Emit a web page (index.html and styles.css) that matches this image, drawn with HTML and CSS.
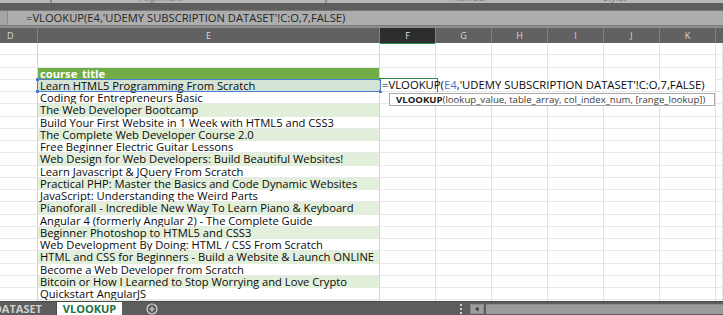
FILE: index.html
```html
<!DOCTYPE html>
<html>
<head>
<meta charset="utf-8">
<link rel="stylesheet" href="styles.css">
</head>
<body>
<div class="app">
  <div class="ribbon-tail">
    <span class="mark m1"></span>
    <span class="grp g1">Alignment</span>
    <span class="mark m2"></span>
    <span class="grp g2">Number</span>
    <span class="grp g3">Styles</span>
    <span class="grp g4">Cells</span>
  </div>
  <div class="ribbon-edge"></div>
  <div class="formula-bar">
    <div class="fx-stub"></div>
    <div class="fx-box">=VLOOKUP(E4,'UDEMY SUBSCRIPTION DATASET'!C:O,7,FALSE)</div>
  </div>
  <div class="fx-gap"></div>
  <div class="col-headers">
    <div class="ch ch-d">D</div>
    <div class="ch">E</div>
    <div class="ch ch-active">F</div>
    <div class="ch">G</div>
    <div class="ch">H</div>
    <div class="ch">I</div>
    <div class="ch">J</div>
    <div class="ch">K</div>
    <div class="ch ch-last"></div>
  </div>
  <div class="sheet">
    <div class="row"><div class="c"></div><div class="c e"></div><div class="c"></div><div class="c"></div><div class="c"></div><div class="c"></div><div class="c"></div><div class="c"></div><div class="c"></div></div>
    <div class="row"><div class="c"></div><div class="c e"></div><div class="c"></div><div class="c"></div><div class="c"></div><div class="c"></div><div class="c"></div><div class="c"></div><div class="c"></div></div>
    <div class="row"><div class="c"></div><div class="c e hdr">course_title</div><div class="c"></div><div class="c"></div><div class="c"></div><div class="c"></div><div class="c"></div><div class="c"></div><div class="c"></div></div>
    <div class="row"><div class="c"></div><div class="c e sel">Learn HTML5 Programming From Scratch</div><div class="c"></div><div class="c"></div><div class="c"></div><div class="c"></div><div class="c"></div><div class="c"></div><div class="c"></div></div>
    <div class="row"><div class="c"></div><div class="c e">Coding for Entrepreneurs Basic</div><div class="c"></div><div class="c"></div><div class="c"></div><div class="c"></div><div class="c"></div><div class="c"></div><div class="c"></div></div>
    <div class="row"><div class="c"></div><div class="c e alt">The Web Developer Bootcamp</div><div class="c"></div><div class="c"></div><div class="c"></div><div class="c"></div><div class="c"></div><div class="c"></div><div class="c"></div></div>
    <div class="row"><div class="c"></div><div class="c e">Build Your First Website in 1 Week with HTML5 and CSS3</div><div class="c"></div><div class="c"></div><div class="c"></div><div class="c"></div><div class="c"></div><div class="c"></div><div class="c"></div></div>
    <div class="row"><div class="c"></div><div class="c e alt">The Complete Web Developer Course 2.0</div><div class="c"></div><div class="c"></div><div class="c"></div><div class="c"></div><div class="c"></div><div class="c"></div><div class="c"></div></div>
    <div class="row"><div class="c"></div><div class="c e">Free Beginner Electric Guitar Lessons</div><div class="c"></div><div class="c"></div><div class="c"></div><div class="c"></div><div class="c"></div><div class="c"></div><div class="c"></div></div>
    <div class="row"><div class="c"></div><div class="c e alt">Web Design for Web Developers: Build Beautiful Websites!</div><div class="c"></div><div class="c"></div><div class="c"></div><div class="c"></div><div class="c"></div><div class="c"></div><div class="c"></div></div>
    <div class="row"><div class="c"></div><div class="c e">Learn Javascript &amp; JQuery From Scratch</div><div class="c"></div><div class="c"></div><div class="c"></div><div class="c"></div><div class="c"></div><div class="c"></div><div class="c"></div></div>
    <div class="row"><div class="c"></div><div class="c e alt">Practical PHP: Master the Basics and Code Dynamic Websites</div><div class="c"></div><div class="c"></div><div class="c"></div><div class="c"></div><div class="c"></div><div class="c"></div><div class="c"></div></div>
    <div class="row"><div class="c"></div><div class="c e">JavaScript: Understanding the Weird Parts</div><div class="c"></div><div class="c"></div><div class="c"></div><div class="c"></div><div class="c"></div><div class="c"></div><div class="c"></div></div>
    <div class="row"><div class="c"></div><div class="c e alt">Pianoforall - Incredible New Way To Learn Piano &amp; Keyboard</div><div class="c"></div><div class="c"></div><div class="c"></div><div class="c"></div><div class="c"></div><div class="c"></div><div class="c"></div></div>
    <div class="row"><div class="c"></div><div class="c e">Angular 4 (formerly Angular 2) - The Complete Guide</div><div class="c"></div><div class="c"></div><div class="c"></div><div class="c"></div><div class="c"></div><div class="c"></div><div class="c"></div></div>
    <div class="row"><div class="c"></div><div class="c e alt">Beginner Photoshop to HTML5 and CSS3</div><div class="c"></div><div class="c"></div><div class="c"></div><div class="c"></div><div class="c"></div><div class="c"></div><div class="c"></div></div>
    <div class="row"><div class="c"></div><div class="c e">Web Development By Doing: HTML / CSS From Scratch</div><div class="c"></div><div class="c"></div><div class="c"></div><div class="c"></div><div class="c"></div><div class="c"></div><div class="c"></div></div>
    <div class="row"><div class="c"></div><div class="c e alt">HTML and CSS for Beginners - Build a Website &amp; Launch ONLINE</div><div class="c"></div><div class="c"></div><div class="c"></div><div class="c"></div><div class="c"></div><div class="c"></div><div class="c"></div></div>
    <div class="row"><div class="c"></div><div class="c e">Become a Web Developer from Scratch</div><div class="c"></div><div class="c"></div><div class="c"></div><div class="c"></div><div class="c"></div><div class="c"></div><div class="c"></div></div>
    <div class="row"><div class="c"></div><div class="c e alt">Bitcoin or How I Learned to Stop Worrying and Love Crypto</div><div class="c"></div><div class="c"></div><div class="c"></div><div class="c"></div><div class="c"></div><div class="c"></div><div class="c"></div></div>
    <div class="row"><div class="c"></div><div class="c e">Quickstart AngularJS</div><div class="c"></div><div class="c"></div><div class="c"></div><div class="c"></div><div class="c"></div><div class="c"></div><div class="c"></div></div>
    <div class="row"><div class="c"></div><div class="c e alt"></div><div class="c"></div><div class="c"></div><div class="c"></div><div class="c"></div><div class="c"></div><div class="c"></div><div class="c"></div></div>

    <div class="range-ref">
      <span class="knob k-tl"></span><span class="knob k-tr"></span><span class="knob k-bl"></span><span class="knob k-br"></span>
    </div>
    <div class="edit">
      <div class="edit-cell"></div>
      <span class="edit-text">=VLOOKUP(<span class="ref">E4</span>,'UDEMY SUBSCRIPTION DATASET'!C:O,7,FALSE)</span>
    </div>
    <div class="tip"><b>VLOOKUP</b>(lookup_value, table_array, col_index_num, [range_lookup])</div>
  </div>
  <div class="tabbar">
    <div class="tab tab-prev"><span>SUBSCRIPTION DATASET</span></div>
    <div class="tab tab-active">VLOOKUP</div>
    <div class="tab-add">
      <svg width="12" height="12" viewBox="0 0 12 12"><circle cx="6" cy="6" r="5" fill="none" stroke="#d6d6d6" stroke-width="1.2"/><path d="M6 3.3V8.7M3.3 6H8.7" stroke="#d6d6d6" stroke-width="1.2"/></svg>
    </div>
    <div class="tab-space"></div>
    <div class="split-dots"><i></i><i></i><i></i></div>
    <div class="scroll-btn">
      <svg width="6" height="6" viewBox="0 0 6 6"><path d="M4.5 0.5V5.5L1 3Z" fill="#3a3a3a"/></svg>
    </div>
    <div class="scroll-track"></div>
  </div>
</div>
</body>
</html>
```

FILE: styles.css
```css
* { box-sizing: border-box; }
html, body { margin: 0; padding: 0; }
body {
  width: 723px;
  height: 315px;
  overflow: hidden;
  background: #ffffff;
  font-family: "Open Sans", "Noto Sans", sans-serif;
}
.app {
  width: 723px;
  height: 315px;
  display: flex;
  flex-direction: column;
  overflow: hidden;
}

/* ribbon remnant */
.ribbon-tail {
  height: 3px;
  background: #b7b7b7;
  overflow: hidden;
  display: grid;
  grid-template-columns: 50px 2px 88px 44px 141px 2px 125px 32px 119px 23px 1fr;
  grid-template-rows: 3px;
}
.grp {
  font-size: 9px;
  line-height: 9px;
  height: 9px;
  margin-top: -7px;
  color: #7a7a7a;
  white-space: nowrap;
}
.mark { background: #8a8a8a; }
.m1 { grid-column: 2; }
.g1 { grid-column: 4; }
.m2 { grid-column: 6; }
.g2 { grid-column: 8; }
.g3 { grid-column: 10; }
.g4 { grid-column: 11; padding-left: 120px; }

.ribbon-edge {
  height: 8px;
  background: #5e5e5e;
  border-bottom: 1px solid #777777;
}

/* formula bar */
.formula-bar {
  height: 14px;
  display: flex;
  background: #adadad;
}
.fx-stub {
  width: 8px;
  border-right: 1px solid #8c8c8c;
  background: #a4a4a4;
}
.fx-box {
  flex: 1;
  padding-left: 18px;
  font-size: 11.2px;
  line-height: 14px;
  color: #262626;
  white-space: nowrap;
}
.fx-gap {
  height: 3px;
  background: #8e8e8e;
  border-top: 1px solid #7a7a7a;
}

/* column headers */
.col-headers {
  height: 15px;
  display: grid;
  grid-template-columns: 38px 342px 56px 56px 56px 56px 56px 56px 1fr;
  background: #616161;
}
.ch {
  font-size: 9px;
  line-height: 15px;
  color: #d8d8d8;
  text-align: center;
  border-right: 1px solid #808080;
}
.ch-d { text-align: left; padding-left: 7px; }
.ch-active {
  background: #2d2d2d;
  color: #e0e0e0;
  border-bottom: 1px solid #2e8b57;
}
.ch-last { border-right: none; }

/* grid */
.sheet {
  position: relative;
  flex: 1;
  overflow: hidden;
  display: grid;
  grid-auto-rows: 12.25px;
  align-content: start;
}
.row {
  display: grid;
  grid-template-columns: 38px 342px 56px 56px 56px 56px 56px 56px 1fr;
}
.c {
  border-right: 1px solid #e2e2e2;
  border-bottom: 1px solid #e8e8e8;
  min-width: 0;
}
.row .c:first-child { border-right-color: #d4d4d4; }
.e {
  font-size: 11.2px;
  line-height: 11px;
  color: #0a0a0a;
  padding-left: 2px;
  white-space: nowrap;
  overflow: visible;
  border-right-color: #c9dfbf;
}
.hdr {
  background: #70ad47;
  color: #ffffff;
  font-weight: 700;
  border-bottom-color: #70ad47;
}
.sel { background: #d4e3d4; }
.alt { background: #e2efda; border-bottom-color: #e2efda; }

/* overlays */
.range-ref {
  position: absolute;
  left: 37px;
  top: 36px;
  width: 344px;
  height: 13px;
  border: 1px solid #4a7fd0;
}
.knob {
  position: absolute;
  width: 3px;
  height: 3px;
  background: #4a7fd0;
}
.k-tl { left: -2px; top: -2px; }
.k-tr { right: -2px; top: -2px; }
.k-bl { left: -2px; bottom: -2px; }
.k-br { right: -2px; bottom: -2px; }

.edit {
  position: absolute;
  left: 381px;
  top: 36px;
  width: 334px;
  height: 12px;
  background: #ffffff;
}
.edit-cell {
  position: absolute;
  left: -1px;
  top: -1px;
  width: 58px;
  height: 14px;
  border: 1px solid #2f8a55;
  border-left: none;
  border-bottom: none;
}
.edit-text {
  position: absolute;
  left: 1px;
  top: 0;
  font-size: 11.3px;
  line-height: 12.5px;
  color: #0a0a0a;
  white-space: nowrap;
}
.ref { color: #3e74c9; }

.tip {
  position: absolute;
  left: 389px;
  top: 50px;
  width: 326px;
  height: 13px;
  background: #ffffff;
  border: 1px solid #a9a9a9;
  font-size: 9.6px;
  line-height: 11px;
  padding-left: 6px;
  color: #3c3c3c;
  white-space: nowrap;
}
.tip b { color: #1a1a1a; }

/* tab bar */
.tabbar {
  height: 14px;
  flex: none;
  display: flex;
  align-items: stretch;
  background: #5d5d5d;
  border-top: 1px solid #4a4a4a;
}
.tab {
  font-size: 11px;
  font-weight: 700;
  line-height: 13px;
  white-space: nowrap;
}
.tab-prev {
  width: 57px;
  overflow: hidden;
  display: flex;
  justify-content: flex-end;
  padding-right: 14px;
  color: #d0d0d0;
  border-right: 1px solid #4c4c4c;
}
.tab-active {
  width: 65px;
  background: #ffffff;
  color: #217346;
  text-align: center;
}
.tab-add {
  width: 36px;
  padding-left: 24px;
  display: flex;
  align-items: center;
}
.tab-space { flex: 1; }
.split-dots {
  width: 11px;
  display: flex;
  flex-direction: column;
  justify-content: center;
  gap: 2px;
  padding-left: 1px;
}
.split-dots i {
  display: block;
  width: 2px;
  height: 2px;
  background: #cfcfcf;
}
.scroll-btn {
  width: 14px;
  margin: 2px 1px 1px 0;
  background: #9e9e9e;
  border: 1px solid #888888;
  display: flex;
  align-items: center;
  justify-content: center;
}
.scroll-track {
  width: 237px;
  margin: 2px 0 1px 1px;
  background: #9b9b9b;
  border-top: 1px solid #8a8a8a;
}
```
